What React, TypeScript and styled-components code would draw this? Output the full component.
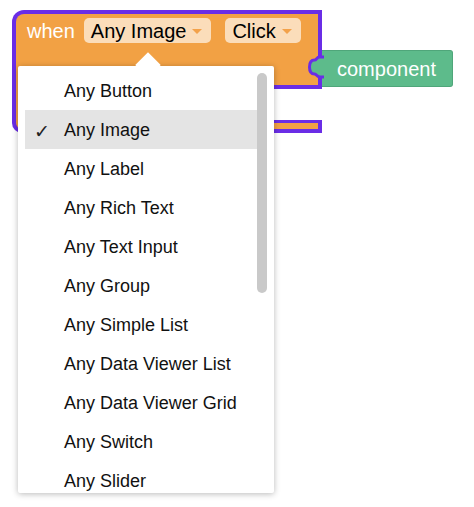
import styled, { createGlobalStyle } from 'styled-components';

const ORANGE = '#F2A144';
const PURPLE = '#6A2DE6';
const GREEN = '#5DBB8B';

const GlobalStyle = createGlobalStyle`
  html, body {
    margin: 0;
    padding: 0;
    background: #ffffff;
    font-family: "Liberation Sans", Arial, Helvetica, sans-serif;
  }
`;

const Workspace = styled.div`
  position: relative;
  width: 474px;
  height: 507px;
  overflow: hidden;
  background: #ffffff;
`;

const EventBlock = styled.div`
  position: absolute;
  left: 12px;
  top: 10px;
  width: 310px;
  display: flex;
  flex-direction: column;
`;

const BlockHead = styled.div`
  box-sizing: border-box;
  height: 75px;
  background: ${ORANGE};
  border: 4px solid ${PURPLE};
  border-bottom: none;
  border-top-left-radius: 12px;
  padding: 4px 0 0 11px;
  display: flex;
  align-items: flex-start;
  gap: 9px;
`;

const Keyword = styled.span`
  color: #ffffff;
  font-size: 20px;
  line-height: 25px;
  padding-top: 1px;
`;

const Fields = styled.div`
  display: flex;
  gap: 14px;
`;

const Field = styled.div`
  box-sizing: border-box;
  height: 25px;
  display: flex;
  align-items: center;
  gap: 6px;
  padding: 1px 9px 0 7px;
  border-radius: 5px;
  background: #FBDDBA;
  color: #000000;
  font-size: 20px;
`;

const Caret = styled.span`
  width: 0;
  height: 0;
  border-left: 5px solid transparent;
  border-right: 5px solid transparent;
  border-top: 5px solid #F3A24A;
  margin-top: 1px;
`;

const Mouth = styled.div`
  display: flex;
  height: 38px;
`;

const Arm = styled.div`
  width: 24px;
  box-sizing: border-box;
  background: ${ORANGE};
  border-left: 4px solid ${PURPLE};
  border-right: 4px solid ${PURPLE};
`;

const MouthGap = styled.div`
  flex: 1;
  box-sizing: border-box;
  border-top: 4px solid ${PURPLE};
  border-bottom: 3px solid ${PURPLE};
  background: transparent;
`;

const BlockFoot = styled.div`
  height: 10px;
  box-sizing: border-box;
  background: ${ORANGE};
  border: 4px solid ${PURPLE};
  border-top: none;
  border-bottom-left-radius: 12px;
`;

const ValueBlock = styled.div`
  position: absolute;
  left: 322px;
  top: 50px;
  height: 37px;
  width: 131px;
  box-sizing: border-box;
  padding: 1px 0 0 15px;
  display: flex;
  align-items: center;
  background: ${GREEN};
  border: 1px solid #4fa67a;
  border-left: none;
  border-radius: 0 3px 3px 0;
  color: #ffffff;
  font-size: 20px;
`;

const Tab = styled.svg`
  position: absolute;
  left: -14px;
  top: 4px;
`;

const Dropdown = styled.div`
  position: absolute;
  left: 18px;
  top: 66px;
  width: 256px;
  height: 427px;
  background: #ffffff;
  border-radius: 2px;
  box-shadow: 0 1px 6px rgba(0, 0, 0, 0.28);
  display: flex;
`;

const Pointer = styled.div`
  position: absolute;
  left: 121px;
  top: -10px;
  width: 18px;
  height: 18px;
  background: #ffffff;
  transform: rotate(45deg);
`;

const Menu = styled.div`
  position: relative;
  flex: 1;
  padding: 5px 0 0 7px;
  overflow: hidden;
  display: flex;
  flex-direction: column;
`;

const Item = styled.div<{ selected?: boolean }>`
  box-sizing: border-box;
  height: 39px;
  flex: none;
  padding-top: 2px;
  display: flex;
  align-items: center;
  background: ${(p) => (p.selected ? '#E4E4E4' : 'transparent')};
  color: #111111;
  font-size: 18px;
`;

const Check = styled.span`
  width: 39px;
  box-sizing: border-box;
  padding-left: 9px;
  font-size: 19px;
  font-family: "DejaVu Sans", sans-serif;
  color: #222222;
`;

const Track = styled.div`
  width: 10px;
  margin: 7px 7px 0 0;
`;

const Thumb = styled.div`
  height: 220px;
  border-radius: 5px;
  background: #C9C9C9;
`;

const items = [
  'Any Button',
  'Any Image',
  'Any Label',
  'Any Rich Text',
  'Any Text Input',
  'Any Group',
  'Any Simple List',
  'Any Data Viewer List',
  'Any Data Viewer Grid',
  'Any Switch',
  'Any Slider',
];

export default function App() {
  return (
    <>
      <GlobalStyle />
      <Workspace>
        <EventBlock>
          <BlockHead>
            <Keyword>when</Keyword>
            <Fields>
              <Field>
                Any Image
                <Caret />
              </Field>
              <Field>
                Click
                <Caret />
              </Field>
            </Fields>
          </BlockHead>
          <Mouth>
            <Arm />
            <MouthGap />
          </Mouth>
          <BlockFoot />
        </EventBlock>

        <ValueBlock>
          <Tab width="16" height="24" viewBox="0 0 16 24">
            <path
              d="M16 2 L12 2 C8 2 9 5 6.5 5 C2 5 1.5 9 1.5 12 C1.5 15 2 19 6.5 19 C9 19 8 22 12 22 L16 22 Z"
              fill={GREEN}
            />
            <path
              d="M16 2 L12 2 C8 2 9 5 6.5 5 C2 5 1.5 9 1.5 12 C1.5 15 2 19 6.5 19 C9 19 8 22 12 22 L16 22"
              fill="none"
              stroke={PURPLE}
              strokeWidth="3"
            />
          </Tab>
          component
        </ValueBlock>

        <Dropdown>
          <Pointer />
          <Menu>
            {items.map((label) => (
              <Item key={label} selected={label === 'Any Image'}>
                <Check>{label === 'Any Image' ? '✓' : ''}</Check>
                {label}
              </Item>
            ))}
          </Menu>
          <Track>
            <Thumb />
          </Track>
        </Dropdown>
      </Workspace>
    </>
  );
}
